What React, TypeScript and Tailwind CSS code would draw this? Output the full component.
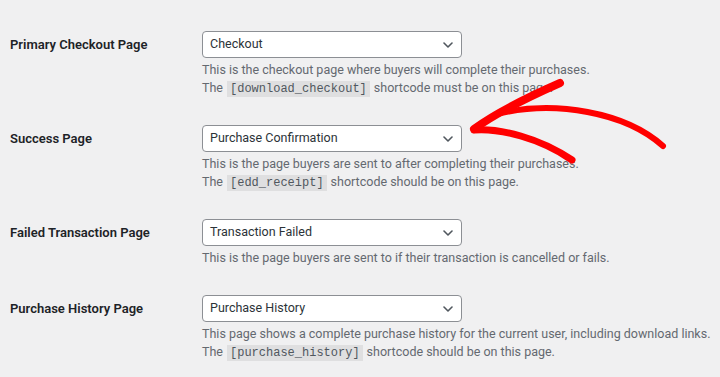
import React from "react";

type Row = {
  label: string;
  value: string;
  lines: React.ReactNode[];
};

const Code = ({ children }: { children: React.ReactNode }) => (
  <code className="bg-[#dfdfe0] px-[3px] py-[1px] mx-[4px] text-[12px] leading-none text-[#50575e] [font-family:'Liberation_Mono',monospace]">
    {children}
  </code>
);

const rows: Row[] = [
  {
    label: "Primary Checkout Page",
    value: "Checkout",
    lines: [
      "This is the checkout page where buyers will complete their purchases.",
      <>
        The<Code>[download_checkout]</Code>shortcode must be on this page.
      </>,
    ],
  },
  {
    label: "Success Page",
    value: "Purchase Confirmation",
    lines: [
      "This is the page buyers are sent to after completing their purchases.",
      <>
        The<Code>[edd_receipt]</Code>shortcode should be on this page.
      </>,
    ],
  },
  {
    label: "Failed Transaction Page",
    value: "Transaction Failed",
    lines: ["This is the page buyers are sent to if their transaction is cancelled or fails."],
  },
  {
    label: "Purchase History Page",
    value: "Purchase History",
    lines: [
      "This page shows a complete purchase history for the current user, including download links.",
      <>
        The<Code>[purchase_history]</Code>shortcode should be on this page.
      </>,
    ],
  },
];

export default function App() {
  return (
    <div className="relative w-[720px] h-[377px] overflow-hidden bg-[#f0f0f1] [font-family:Roboto,'Liberation_Sans',sans-serif] pt-[17px]">
      {rows.map((r) => (
        <div key={r.label} className="flex py-[14px]">
          <div className="w-[202px] shrink-0 pl-[10px] h-[27px] flex items-center text-[13px] font-semibold text-[#1d2327]">
            {r.label}
          </div>
          <div className="flex flex-col">
            <div className="w-[260px] h-[27px] rounded-[4px] border border-[#8c8f94] bg-white flex items-center justify-between pl-[7px] pr-[8px] text-[12.5px] text-[#2c3338]">
              <span>{r.value}</span>
              <svg width="10" height="6" viewBox="0 0 10 6" className="mt-[1px]">
                <polyline points="1,1 5,5 9,1" fill="none" stroke="#50575e" strokeWidth="1.6" strokeLinecap="round" strokeLinejoin="round" />
              </svg>
            </div>
            <div className="mt-[3px] text-[12.5px] text-[#646970] whitespace-nowrap">
              {r.lines.map((l, i) => (
                <div key={i} className="h-[18px] leading-[18px]">{l}</div>
              ))}
            </div>
          </div>
        </div>
      ))}
      <svg className="absolute left-0 top-0 pointer-events-none" width="720" height="377" viewBox="0 0 720 377">
        <g fill="none" stroke="#ff0000" strokeLinecap="round" strokeLinejoin="round">
          <path d="M560,83 C535,94 500,110 474,129" strokeWidth="8" />
          <path d="M474,130 C500,128 540,138 572,160" strokeWidth="7" />
          <path d="M497,114 C555,100 625,112 663,146" strokeWidth="6" />
        </g>
      </svg>
    </div>
  );
}
